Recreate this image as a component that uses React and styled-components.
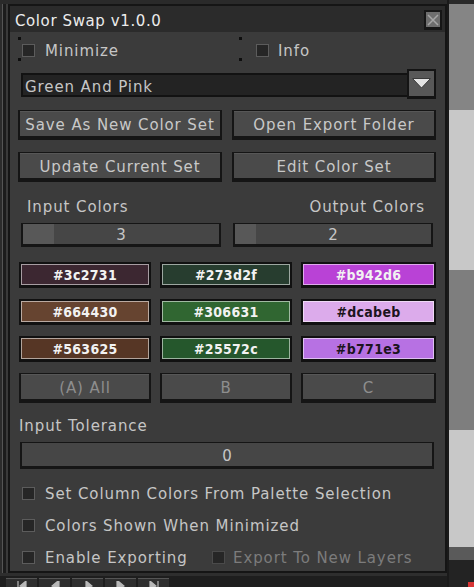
import React from "react";
import styled, { createGlobalStyle } from "styled-components";

const GlobalStyle = createGlobalStyle`
  html, body { margin: 0; padding: 0; background: #222; }
  body { overflow: hidden; font-family: "DejaVu Sans", "Liberation Sans", sans-serif; }
  #root { width: 474px; height: 587px; }
  * { box-sizing: border-box; }
`;

const FONT = `"DejaVu Sans", "Liberation Sans", sans-serif`;

const Screen = styled.div`
  width: 474px;
  height: 587px;
  display: grid;
  grid-template-columns: 8px 439px 1fr;
  grid-template-rows: 4px 569px 1fr;
  background: #222;
  overflow: hidden;
`;

const TopEdge = styled.div`
  grid-column: 1 / 3;
  grid-row: 1;
  background: #2a2a2a;
`;

const LeftStrip = styled.div`
  grid-column: 1;
  grid-row: 2;
  background: linear-gradient(
    to right,
    #2c2c2c 0 2px,
    #555 2px 3px,
    #1c1c1c 3px 6px,
    #3a3a3a 6px 8px
  );
`;

const Canvas = styled.div`
  grid-column: 3;
  grid-row: 1 / 4;
  display: flex;
  align-items: flex-end;
  justify-content: flex-end;
  background: linear-gradient(
    to bottom,
    #2a2a2a 0 4px,
    #858585 4px 110px,
    #c8c8c8 110px 270px,
    #7e7e7e 270px 430px,
    #c8c8c8 430px 547px,
    #5a5a5a 547px 560px,
    #232323 560px
  );
  border-left: 2px solid #1a1a1a;
`;

const RedMark = styled.div`
  width: 6px;
  height: 10px;
  background: #d83434;
`;

const BottomBar = styled.div`
  grid-column: 1 / 3;
  grid-row: 3;
  background: #1e1e1e;
  border-top: 3px solid #2e2e2e;
  padding: 2px 0 0 6px;
  display: flex;
  gap: 2px;
`;

const TimelineButton = styled.div`
  width: 31px;
  height: 14px;
  background: #2e2e2e;
  border-top: 1px solid #555;
  display: flex;
  justify-content: center;
  padding-top: 2px;
  color: #b8b8b8;
`;

const Dialog = styled.div`
  grid-column: 2;
  grid-row: 2;
  border: 2px solid #151515;
  background: #3b3b3b;
  display: flex;
  flex-direction: column;
  font-family: ${FONT};
`;

const TitleBar = styled.div`
  height: 26px;
  background: #2b2b2b;
  display: flex;
  align-items: center;
  justify-content: space-between;
  padding: 0 3px 0 5px;
`;

const Title = styled.span`
  font-size: 15px;
  letter-spacing: 0.6px;
  color: #ececec;
  white-space: nowrap;
  padding-top: 4px;
`;

const CloseButton = styled.div`
  width: 18px;
  height: 20px;
  margin-top: 2px;
  background: #6e6e6e;
  border: 2px solid #161616;
  border-bottom-width: 3px;
  display: flex;
  align-items: center;
  justify-content: center;
`;

const Body = styled.div`
  display: flex;
  flex-direction: column;
  padding: 0 9px 0 8px;
`;

const Label = styled.span`
  font-size: 15px;
  letter-spacing: 0.9px;
  color: ${(p) => (p.$disabled ? "#7c7c7c" : "#c6c6c6")};
  white-space: nowrap;
  line-height: 18px;
  padding-top: 3px;
`;

const TopRow = styled.div`
  margin-top: 5px;
  height: 24px;
  display: flex;
  align-items: center;
  gap: 14px;
`;

const FocusField = styled.div`
  width: 224px;
  height: 24px;
  display: flex;
  align-items: center;
  gap: 10px;
  padding-left: 4px;
  background:
    linear-gradient(#0e0e0e, #0e0e0e) left top / 3px 3px no-repeat,
    linear-gradient(#0e0e0e, #0e0e0e) right top / 3px 3px no-repeat,
    linear-gradient(#0e0e0e, #0e0e0e) left bottom / 3px 3px no-repeat,
    linear-gradient(#0e0e0e, #0e0e0e) right bottom / 3px 3px no-repeat;
`;

const CheckField = styled.div`
  display: flex;
  align-items: center;
  gap: ${(p) => p.$gap || 10}px;
  padding-left: ${(p) => p.$indent || 0}px;
`;

const CheckBox = styled.span`
  display: inline-block;
  width: 13px;
  height: 13px;
  flex: none;
  margin-top: 2px;
  background: #262626;
  border: 1px solid ${(p) => (p.$disabled ? "#4a4a4a" : "#5c5c5c")};
`;

const ComboRow = styled.div`
  margin-top: 8px;
  height: 30px;
  display: flex;
  align-items: center;
  padding-left: 3px;
`;

const ComboEntry = styled.div`
  flex: 1;
  height: 24px;
  margin-top: 2px;
  background: #232323;
  border: 2px solid #121212;
  border-right: none;
  display: flex;
  align-items: center;
  padding-left: 2px;
`;

const ComboButton = styled.div`
  width: 29px;
  height: 30px;
  background: #585858;
  border: 2px solid #141414;
  border-bottom-width: 3px;
  display: flex;
  align-items: center;
  justify-content: center;
`;

const ButtonGrid = styled.div`
  margin-top: 11px;
  display: grid;
  grid-template-columns: 1fr 1fr;
  column-gap: 10px;
  row-gap: 12px;
`;

const Button = styled.div`
  height: 30px;
  background: #4a4a4a;
  border: 2px solid #151515;
  border-top-width: 1px;
  border-bottom-width: 4px;
  box-shadow: inset 0 1px 0 #575757;
  display: flex;
  align-items: center;
  justify-content: center;
  padding-top: 2px;
  font-size: 15px;
  letter-spacing: 0.9px;
  color: ${(p) => (p.$dim ? "#8e8e8e" : "#c8c8c8")};
  white-space: nowrap;
`;

const LabelRow = styled.div`
  margin-top: 13px;
  height: 20px;
  display: flex;
  justify-content: space-between;
  padding: 0 11px 0 9px;
`;

const SliderRow = styled.div`
  margin-top: 8px;
  display: grid;
  grid-template-columns: 1fr 1fr;
  column-gap: 12px;
  padding: 0 3px;
`;

const SliderTrack = styled.div`
  height: ${(p) => p.$h || 24}px;
  background: #464646;
  border: 2px solid #151515;
  border-top-width: 1px;
  border-bottom-width: 3px;
  display: grid;
  margin: ${(p) => (p.$wide ? "0 2px" : "0")};
`;

const SliderFill = styled.div`
  grid-area: 1 / 1;
  background: #585858;
  height: 100%;
`;

const SliderValue = styled.span`
  grid-area: 1 / 1;
  align-self: center;
  justify-self: center;
  font-size: 15px;
  color: #c6c6c6;
  line-height: 18px;
  padding-top: 2px;
`;

const SwatchGrid = styled.div`
  margin-top: 15px;
  display: grid;
  grid-template-columns: 132px 132px 1fr;
  grid-template-rows: 26px 26px 26px 30px;
  column-gap: 9px;
  row-gap: 11px;
  padding-left: 1px;
`;

const Swatch = styled.div`
  border: 2px solid #111;
  border-bottom-width: 3px;
  background: ${(p) => p.$color};
  box-shadow: inset 0 0 0 1px rgba(255, 255, 255, 0.55);
  display: flex;
  align-items: center;
  justify-content: center;
  font-family: "DejaVu Sans Condensed", "DejaVu Sans", sans-serif;
  font-stretch: condensed;
  font-weight: bold;
  font-size: 14px;
  letter-spacing: 0.3px;
  color: ${(p) => (p.$light ? "#1c1420" : "#f2f2f2")};
`;

const SectionLabel = styled(Label)`
  margin-top: 11px;
  display: block;
  padding-left: 1px;
`;

const Tolerance = styled.div`
  margin-top: 7px;
`;

const CheckList = styled.div`
  margin-top: 13px;
  display: flex;
  flex-direction: column;
  gap: 12px;
`;

const CheckRow = styled.div`
  height: 20px;
  display: grid;
  grid-template-columns: ${(p) => (p.$split ? "194px 1fr" : "1fr")};
  align-items: center;
`;

function Check({ label, disabled, indent = 4, gap = 10 }) {
  return (
    <CheckField $indent={indent} $gap={gap}>
      <CheckBox $disabled={disabled} />
      <Label $disabled={disabled}>{label}</Label>
    </CheckField>
  );
}

function Slider({ value, max = 19, wide, h }) {
  return (
    <SliderTrack $wide={wide} $h={h}>
      <SliderFill style={{ width: `${(value / max) * 100}%` }} />
      <SliderValue>{value}</SliderValue>
    </SliderTrack>
  );
}

const hexLum = (hex) => {
  const n = parseInt(hex.slice(1), 16);
  const r = (n >> 16) & 255;
  const g = (n >> 8) & 255;
  const b = n & 255;
  return 0.299 * r + 0.587 * g + 0.114 * b;
};

const swatches = [
  "#3c2731", "#273d2f", "#b942d6",
  "#664430", "#306631", "#dcabeb",
  "#563625", "#25572c", "#b771e3",
];

const TriangleIcon = () => (
  <svg width="19" height="11" viewBox="0 0 19 11">
    <polygon points="0.5,0.5 18.5,0.5 9.5,10" fill="#e4e4e4" stroke="#3a3a3a" strokeWidth="1" />
  </svg>
);

const CloseIcon = () => (
  <svg width="12" height="12" viewBox="0 0 12 12">
    <path d="M1 1 L11 11 M11 1 L1 11" stroke="#a6a6a6" strokeWidth="1.5" />
  </svg>
);

const TL = ({ kind }) => {
  const shapes = {
    first: <path d="M1 0 V10 M9 0 L3 5 L9 10 Z" />,
    prev: <path d="M8 0 L2 5 L8 10 Z M9 0 V10" />,
    play: <path d="M3 0 L9 5 L3 10 Z" />,
    next: <path d="M1 0 V10 M2 0 L8 5 L2 10 Z" />,
    last: <path d="M1 0 L7 5 L1 10 Z M9 0 V10" />,
  };
  return (
    <svg width="10" height="10" viewBox="0 0 10 10" fill="#b8b8b8" stroke="#b8b8b8" strokeWidth="1.2">
      {shapes[kind]}
    </svg>
  );
};

export default function App() {
  return (
    <>
      <GlobalStyle />
      <Screen>
        <TopEdge />
        <LeftStrip />
        <Dialog>
          <TitleBar>
            <Title>Color Swap v1.0.0</Title>
            <CloseButton>
              <CloseIcon />
            </CloseButton>
          </TitleBar>
          <Body>
            <TopRow>
              <FocusField>
                <CheckBox />
                <Label>Minimize</Label>
              </FocusField>
              <Check label="Info" indent={0} gap={9} />
            </TopRow>

            <ComboRow>
              <ComboEntry>
                <Label>Green And Pink</Label>
              </ComboEntry>
              <ComboButton>
                <TriangleIcon />
              </ComboButton>
            </ComboRow>

            <ButtonGrid>
              <Button>Save As New Color Set</Button>
              <Button>Open Export Folder</Button>
              <Button>Update Current Set</Button>
              <Button>Edit Color Set</Button>
            </ButtonGrid>

            <LabelRow>
              <Label>Input Colors</Label>
              <Label>Output Colors</Label>
            </LabelRow>

            <SliderRow>
              <Slider value={3} />
              <Slider value={2} />
            </SliderRow>

            <SwatchGrid>
              {swatches.map((c) => (
                <Swatch key={c} $color={c} $light={hexLum(c) > 130}>
                  {c}
                </Swatch>
              ))}
              <Button $dim>(A) All</Button>
              <Button $dim>B</Button>
              <Button $dim>C</Button>
            </SwatchGrid>

            <SectionLabel>Input Tolerance</SectionLabel>
            <Tolerance>
              <Slider value={0} wide h={27} />
            </Tolerance>

            <CheckList>
              <CheckRow>
                <Check label="Set Column Colors From Palette Selection" />
              </CheckRow>
              <CheckRow>
                <Check label="Colors Shown When Minimized" />
              </CheckRow>
              <CheckRow $split>
                <Check label="Enable Exporting" />
                <Check label="Export To New Layers" disabled indent={0} gap={8} />
              </CheckRow>
            </CheckList>
          </Body>
        </Dialog>
        <Canvas>
          <RedMark />
        </Canvas>
        <BottomBar>
          <TimelineButton><TL kind="first" /></TimelineButton>
          <TimelineButton><TL kind="prev" /></TimelineButton>
          <TimelineButton><TL kind="play" /></TimelineButton>
          <TimelineButton><TL kind="next" /></TimelineButton>
          <TimelineButton><TL kind="last" /></TimelineButton>
        </BottomBar>
      </Screen>
    </>
  );
}
